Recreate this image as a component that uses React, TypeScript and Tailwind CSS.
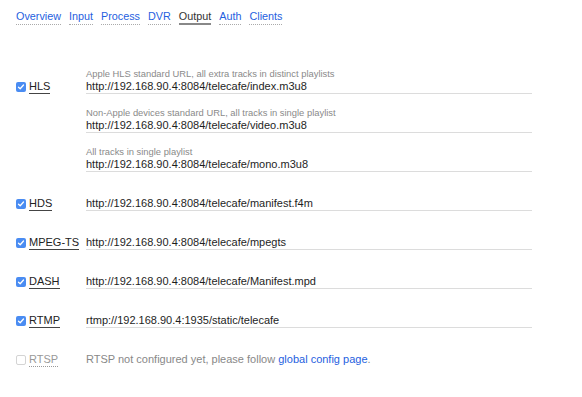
import React from "react";

const Check = ({ on }: { on: boolean }) =>
  on ? (
    <span className="flex h-[10px] w-[10px] items-center justify-center rounded-[2px] bg-[#4a8cf2]">
      <svg width="8" height="8" viewBox="0 0 8 8">
        <path d="M1.5 4.2 L3.2 5.8 L6.5 2" fill="none" stroke="white" strokeWidth="1.3" strokeLinecap="round" strokeLinejoin="round" />
      </svg>
    </span>
  ) : (
    <span className="block h-[10px] w-[10px] rounded-[2px] border border-[#d4d4d4] bg-white" />
  );

const Label = ({ text, on = true }: { text: string; on?: boolean }) => (
  <div className="flex h-[39px] w-[86px] shrink-0 items-end pl-4">
    <div className="flex items-center gap-[3px] whitespace-nowrap">
      <Check on={on} />
      <span
        className={
          on
            ? "block text-[11px] leading-[14px] text-[#222] border-b border-[#444]"
            : "block text-[11px] leading-[14px] text-[#999] border-b border-dotted border-[#999]"
        }
      >
        {text}
      </span>
    </div>
  </div>
);

const Url = ({ desc, url }: { desc?: string; url: string }) => (
  <div className="flex h-[39px] w-[446px] flex-col justify-end border-b border-[#dcdcdc]">
    {desc && <div className="text-[9.4px] leading-[10px] text-[#8a8a8a]">{desc}</div>}
    <div className="text-[11px] leading-[14px] text-[#1e1e1e]">{url}</div>
  </div>
);

const tabs = ["Overview", "Input", "Process", "DVR", "Output", "Auth", "Clients"];

export default function App() {
  return (
    <div className="h-[397px] w-[582px] bg-white font-['Liberation_Sans',Arial,sans-serif]">
      <div className="flex gap-2 px-4 pt-[10px] text-[10.8px] leading-[13px]">
        {tabs.map((t) =>
          t === "Output" ? (
            <span key={t} className="border-b-2 border-[#888] text-[#333]">
              {t}
            </span>
          ) : (
            <span key={t} className="border-b border-dotted border-[#aaa] pb-[1px] text-[#1f5fe0]">
              {t}
            </span>
          )
        )}
      </div>
      <div className="mt-[30px] flex flex-col">
        <div className="flex">
          <div className="flex flex-col">
            <Label text="HLS" />
          </div>
          <div className="flex flex-col">
            <Url desc="Apple HLS standard URL, all extra tracks in distinct playlists" url="http://192.168.90.4:8084/telecafe/index.m3u8" />
            <Url desc="Non-Apple devices standard URL, all tracks in single playlist" url="http://192.168.90.4:8084/telecafe/video.m3u8" />
            <Url desc="All tracks in single playlist" url="http://192.168.90.4:8084/telecafe/mono.m3u8" />
          </div>
        </div>
        <div className="flex">
          <Label text="HDS" />
          <Url url="http://192.168.90.4:8084/telecafe/manifest.f4m" />
        </div>
        <div className="flex">
          <Label text="MPEG-TS" />
          <Url url="http://192.168.90.4:8084/telecafe/mpegts" />
        </div>
        <div className="flex">
          <Label text="DASH" />
          <Url url="http://192.168.90.4:8084/telecafe/Manifest.mpd" />
        </div>
        <div className="flex">
          <Label text="RTMP" />
          <Url url="rtmp://192.168.90.4:1935/static/telecafe" />
        </div>
        <div className="flex">
          <Label text="RTSP" on={false} />
          <div className="flex h-[39px] items-end pb-[1px]">
            <span className="text-[11px] leading-[14px] text-[#888]">
              RTSP not configured yet, please follow <span className="text-[#1f5fe0]">global config page</span>.
            </span>
          </div>
        </div>
      </div>
    </div>
  );
}
